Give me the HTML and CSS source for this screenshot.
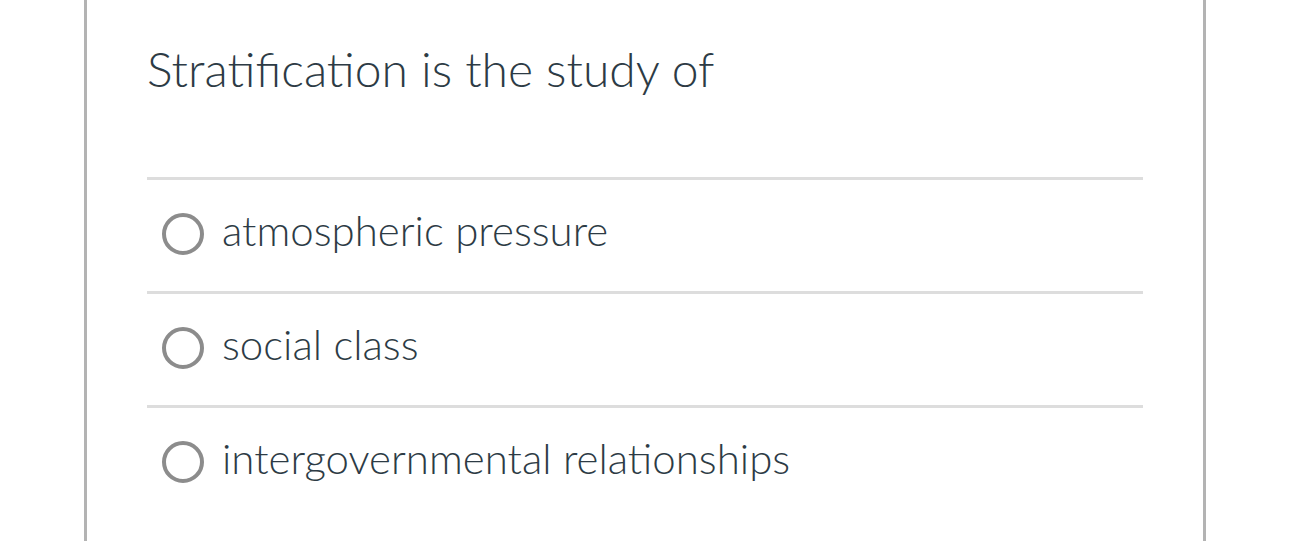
FILE: index.html
```html
<!DOCTYPE html>
<html>
<head>
<meta charset="utf-8">
<link rel="stylesheet" href="styles.css">
</head>
<body>
<div class="page">
  <div class="question">
    <div class="question-text">Stratification is the study of</div>
    <div class="answers">
      <label class="answer"><span class="radio"></span><span class="answer-text">atmospheric pressure</span></label>
      <label class="answer"><span class="radio"></span><span class="answer-text">social class</span></label>
      <label class="answer"><span class="radio"></span><span class="answer-text">intergovernmental relationships</span></label>
    </div>
  </div>
</div>
</body>
</html>
```

FILE: styles.css
```css
html, body {
  margin: 0;
  padding: 0;
  background: #ffffff;
  height: 100%;
  overflow: hidden;
}
body {
  font-family: "Lato", "Liberation Sans", sans-serif;
  font-weight: 300;
  color: #2d3b45;
}
.page {
  margin-left: 84px;
  width: 996px;
  height: 100%;
  border-left: 3px solid #b3b3b3;
  border-right: 3px solid #b3b3b3;
  padding: 0 60px;
}
.question-text {
  font-size: 48px;
  line-height: 1;
  padding-top: 45px;
  height: 177px;
  box-sizing: border-box;
}
.answers {
  display: flex;
  flex-direction: column;
}
.answer {
  display: flex;
  align-items: center;
  border-top: 3px solid #dddddd;
  height: 114px;
  box-sizing: border-box;
  padding-left: 15px;
  padding-bottom: 7px;
}
.radio {
  width: 34px;
  height: 34px;
  border: 4px solid #8c8c8c;
  border-radius: 50%;
  flex: none;
  margin-right: 18px;
  margin-top: 4px;
}
.answer-text {
  font-size: 42px;
  line-height: 1;
  padding-bottom: 4px;
}
```
